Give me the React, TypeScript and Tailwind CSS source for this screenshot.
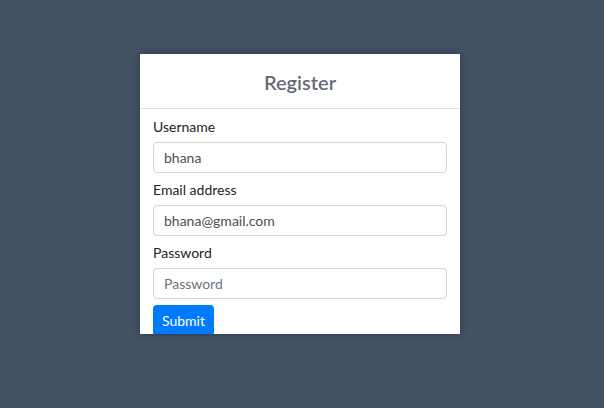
export default function App() {
  return (
    <div className="min-h-screen bg-[#435165] flex justify-center pr-[4px] pt-[54px] font-['Lato',sans-serif]">
      <div className="w-[320px] h-[280px] bg-white shadow-[0_0_8px_rgba(0,0,0,0.3)] overflow-hidden">
        <div className="h-[55px] pt-[2px] border-b border-[#dee2e6] flex items-center justify-center">
          <h1 className="text-[20px] font-semibold text-[#656b75]">Register</h1>
        </div>
        <form className="px-[13px] pt-[8px]">
          <div className="mb-[7px]">
            <label className="block text-[14px] leading-5 text-[#212529] mb-[5px]">Username</label>
            <input
              type="text"
              defaultValue="bhana"
              className="w-full h-[31px] border border-[#ced4da] rounded px-[10px] text-[14px] text-[#495057] outline-none"
            />
          </div>
          <div className="mb-[7px]">
            <label className="block text-[14px] leading-5 text-[#212529] mb-[5px]">Email address</label>
            <input
              type="email"
              defaultValue="bhana@gmail.com"
              className="w-full h-[31px] border border-[#ced4da] rounded px-[10px] text-[14px] text-[#495057] outline-none"
            />
          </div>
          <div className="mb-[6px]">
            <label className="block text-[14px] leading-5 text-[#212529] mb-[5px]">Password</label>
            <input
              type="password"
              placeholder="Password"
              className="w-full h-[31px] border border-[#ced4da] rounded px-[10px] text-[14px] text-[#495057] placeholder:text-[#6c757d] outline-none"
            />
          </div>
          <button
            type="submit"
            className="h-[31px] w-[61px] bg-[#007bff] text-white text-[14px] rounded"
          >
            Submit
          </button>
        </form>
      </div>
    </div>
  )
}
